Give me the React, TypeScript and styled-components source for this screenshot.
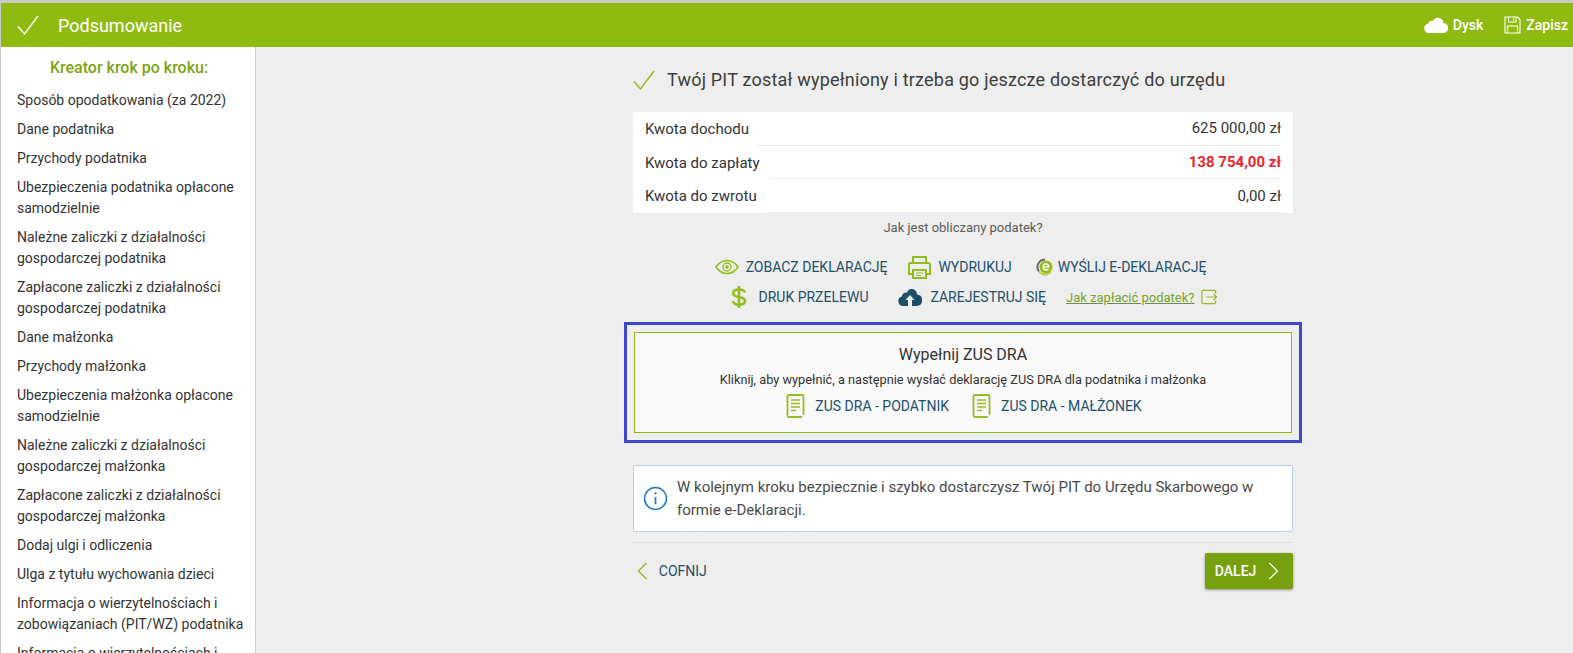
import React from 'react';
import styled, { createGlobalStyle } from 'styled-components';

const GlobalStyle = createGlobalStyle`
  html, body {
    margin: 0;
    padding: 0;
    height: 100%;
    overflow: hidden;
    background: #eeeeee;
    font-family: Roboto, "Liberation Sans", sans-serif;
  }
`;

const GREEN = '#8fbb11';

const Page = styled.div`
  width: 1573px;
  height: 653px;
  overflow: hidden;
  box-sizing: border-box;
  border-top: 3px solid #c8c8c8;
  border-left: 1px solid #c8c8c8;
  display: flex;
  flex-direction: column;
  background: #eeeeee;
`;

const TopBar = styled.header`
  flex: none;
  height: 44px;
  background: ${GREEN};
  display: flex;
  align-items: center;
  padding: 0 5px 0 16px;
  color: #fff;
`;

const TopTitle = styled.h1`
  margin: 0 0 0 19px;
  font-size: 18px;
  font-weight: 400;
  flex: 1;
`;

const TopLink = styled.a`
  display: flex;
  align-items: center;
  gap: 5px;
  font-size: 14px;
  font-weight: 500;
  margin-left: 21px;
  color: #fff;
`;

const Body = styled.div`
  flex: 1;
  min-height: 0;
  display: flex;
`;

const Sidebar = styled.nav`
  flex: none;
  width: 255px;
  box-sizing: border-box;
  background: #fff;
  border-right: 1px solid #d2d2d2;
  padding: 10px 8px 0 16px;
  overflow: hidden;
`;

const SidebarTitle = styled.div`
  color: #7ea313;
  font-size: 16px;
  font-weight: 500;
  text-align: center;
  line-height: 22px;
  margin: 0 6px 7px 0;
`;

const StepList = styled.ul`
  list-style: none;
  margin: 0;
  padding: 0;
`;

const Step = styled.li`
  font-size: 14px;
  line-height: 21px;
  color: #333333;
  padding: 4px 0;
`;

const Main = styled.main`
  flex: 1;
  min-width: 0;
  padding: 0 0 0 377px;
`;

const Column = styled.div`
  width: 660px;
`;

const Heading = styled.h2`
  display: flex;
  align-items: center;
  gap: 12px;
  margin: 19px 0 0;
  height: 27px;
  font-size: 18px;
  font-weight: 400;
  letter-spacing: 0.2px;
  color: #3d3d3d;
`;

const Summary = styled.div`
  margin-top: 19px;
  background: #fff;
  height: 101px;
  display: flex;
  flex-direction: column;
`;

const SummaryRow = styled.div`
  flex: 1;
  display: flex;
  align-items: stretch;
`;

const SummaryLabel = styled.div`
  display: flex;
  align-items: center;
  padding: 0 9px 0 12px;
  font-size: 15px;
  color: #333;
`;

const SummaryValue = styled.div<{ $due?: boolean }>`
  flex: 1;
  display: flex;
  align-items: center;
  justify-content: flex-end;
  margin-right: 12px;
  border-bottom: 1px solid #ececec;
  font-size: 15px;
  font-weight: ${p => (p.$due ? 700 : 400)};
  color: ${p => (p.$due ? '#e8262f' : '#333')};
`;

const HowLink = styled.div`
  margin-top: 7px;
  text-align: center;
  font-size: 13px;
  line-height: 16px;
  color: #5c5c5c;
`;

const Actions = styled.div<{ $first?: boolean; $indent?: number }>`
  display: flex;
  align-items: center;
  justify-content: center;
  height: 30px;
  padding-left: ${p => p.$indent ?? 0}px;
  padding-right: ${p => (p.$first ? '5px' : '0')};
  margin-top: ${p => (p.$first ? '16px' : '0')};
`;

const Action = styled.a<{ $gap?: number; $left?: number }>`
  display: flex;
  align-items: center;
  gap: ${p => p.$gap ?? 9}px;
  margin-left: ${p => p.$left ?? 0}px;
  font-size: 14px;
  color: #21506b;
`;

const PayLink = styled.a`
  display: flex;
  align-items: center;
  gap: 7px;
  margin-left: 20px;
  font-size: 13px;
  color: #76a32a;
  span {
    text-decoration: underline;
    text-decoration-color: #6f8a4d;
  }
`;

const ZusFrame = styled.div`
  margin: 10px -9px 0;
  border: 3px solid #3f48cc;
  padding: 7px;
`;

const ZusBox = styled.section`
  height: 101px;
  box-sizing: border-box;
  border: 1px solid ${GREEN};
  background: #f9f9f9;
  display: flex;
  flex-direction: column;
  align-items: center;
  padding-top: 12px;
`;

const ZusTitle = styled.div`
  font-size: 16px;
  line-height: 20px;
  color: #333;
`;

const ZusText = styled.div`
  margin-top: 7px;
  font-size: 12.75px;
  line-height: 16px;
  color: #333;
`;

const ZusLinks = styled.div`
  margin-top: 6px;
  margin-left: 2px;
  display: flex;
  gap: 23px;
`;

const Info = styled.div`
  margin-top: 22px;
  height: 67px;
  box-sizing: border-box;
  background: #fff;
  border: 1px solid #b9cfe8;
  border-radius: 2px;
  display: flex;
  align-items: center;
  gap: 9px;
  padding: 0 30px 0 9px;
  font-size: 15px;
  line-height: 23px;
  color: #4a4a4a;
`;

const Footer = styled.div`
  margin-top: 10px;
  border-top: 1px solid #dedede;
  padding-top: 10px;
  display: flex;
  align-items: center;
  justify-content: space-between;
`;

const BackLink = styled.a`
  display: flex;
  align-items: center;
  gap: 11px;
  margin-left: 4px;
  margin-top: -1px;
  font-size: 14px;
  color: #21506b;
`;

const NextButton = styled.button`
  width: 88px;
  height: 36px;
  border: 0;
  padding: 0 4px 0 0;
  border-radius: 2px;
  background: #76a00e;
  box-shadow: 0 1px 3px rgba(0, 0, 0, 0.4);
  color: #fff;
  font-family: inherit;
  font-size: 14px;
  font-weight: 500;
  display: flex;
  align-items: center;
  justify-content: center;
  gap: 12px;
`;

const Check = ({ size, color }: { size: number; color: string }) => (
  <svg width={size} height={size} viewBox="0 0 22 22" fill="none">
    <path d="M1 12.5 L7.5 20 L21 2" stroke={color} strokeWidth="1.4" />
  </svg>
);

const CloudIcon = () => (
  <svg width="24" height="16" viewBox="0 0 24 16">
    <path fill="#fff" d="M5 16a4.7 4.7 0 0 1-1-9.3A5.6 5.6 0 0 1 9 3.500a6 6 0 0 1 3.500-2.500c3.500-.8 6.500 1.500 7 5a4.800 4.800 0 0 1-.5 10z" />
  </svg>
);

const SaveIcon = () => (
  <svg width="17" height="18" viewBox="0 0 17 18" fill="none" stroke="#fff" strokeWidth="1.1">
    <path d="M1 1h12.500L16 3.500V17H1z" />
    <path d="M4.500 1v5h7.500V1M9.500 2.500v2M3.500 17v-7h10v7" />
  </svg>
);

const EyeIcon = () => (
  <svg width="24" height="16" viewBox="0 0 24 16" fill="none" stroke="#94bd1f">
    <path strokeWidth="1.600" d="M1 8c3-4.500 7-6.500 11-6.500S20 3.500 23 8c-3 4.500-7 6.500-11 6.500S4 12.500 1 8z" />
    <circle cx="12" cy="8" r="4" strokeWidth="1.400" />
    <circle cx="12" cy="8" r="1.800" fill="#94bd1f" stroke="none" />
  </svg>
);

const PrinterIcon = () => (
  <svg width="25" height="25" viewBox="0 0 25 25" fill="none" stroke="#94bd1f" strokeWidth="2">
    <path d="M6 8V2h13v6" />
    <path d="M6 19H2V9.500C2 8.500 2.500 8 3.500 8h18c1 0 1.500.5 1.500 1.500V19h-4" />
    <path d="M6 15h13v8H6z" />
    <path d="M9 18h7M9 20.500h5" strokeWidth="1.200" />
  </svg>
);

const EDeclarationIcon = () => (
  <svg width="18" height="18" viewBox="0 0 18 18" fill="none">
    <path d="M9 1.500a7.500 7.500 0 0 0-6 12" stroke="#666" strokeWidth="2" />
    <path d="M3 13.500a7.500 7.500 0 0 0 12 0" stroke="#b5d334" strokeWidth="2" />
    <circle cx="10" cy="9" r="6.500" fill="#94bd1f" />
    <path d="M7.300 9h5.400c0-2-1-3-2.700-3s-2.800 1.200-2.800 3 1.100 3 2.800 3c1 0 1.800-.3 2.400-1" stroke="#fff" strokeWidth="1.300" />
  </svg>
);

const DollarIcon = () => (
  <svg width="16" height="24" viewBox="0 0 16 24" fill="none" stroke="#94bd1f" strokeWidth="2.600">
    <path d="M14 7.500C13.500 5.500 11 4.500 8 4.500c-3.500 0-6 1.300-6 3.700C2 13.500 14 10.500 14 16c0 2.400-2.500 3.700-6 3.700-3.200 0-5.500-1.200-6-3.400" />
    <path d="M8 1v22" />
  </svg>
);

const CloudUploadIcon = () => (
  <svg width="24" height="18" viewBox="0 0 24 18">
    <path fill="#1c5068" d="M5 18a4.800 4.800 0 0 1-1.200-9.400A5 5 0 0 1 9 4.500 5.500 5.500 0 0 1 13.500 1c3 0 5.300 2.200 5.700 5.500A5.800 5.800 0 0 1 19 18z" />
    <path fill="#eeeeee" d="M12 7l4.500 5H14v6h-4v-6H7.500z" />
  </svg>
);

const ExitIcon = () => (
  <svg width="16" height="16" viewBox="0 0 18 18" fill="none" stroke="#94bd1f" strokeWidth="1.400">
    <path d="M16.500 5V3c0-1-.5-1.500-1.500-1.500H2.500C1.500 1.500 1 2 1 3v12c0 1 .5 1.500 1.500 1.500H15c1 0 1.500-.5 1.500-1.500v-2" />
    <path d="M6 9h11.500M14 5.500 17.500 9 14 12.500" />
  </svg>
);

const DocIcon = () => (
  <svg width="19" height="24" viewBox="0 0 19 24" fill="none" stroke="#94bd1f">
    <path strokeWidth="1.800" d="M17.500 21V2.500C17.500 1.500 17 1 16 1H3C2 1 1.500 1.500 1.500 2.500v19c0 .9.600 1.500 1.500 1.500h13" />
    <path strokeWidth="1.600" d="M5 6h9M5 9.500h9M5 13h9M5 16.500h5" />
  </svg>
);

const InfoGlyph = styled.svg`
  flex: none;
`;

const InfoIcon = () => (
  <InfoGlyph width="25" height="25" viewBox="0 0 24 24" fill="none" stroke="#1976d2">
    <circle cx="12" cy="12" r="10.500" strokeWidth="1.400" />
    <path d="M12 10.500v7" strokeWidth="1.600" />
    <circle cx="12" cy="7" r="1.100" fill="#1976d2" stroke="none" />
  </InfoGlyph>
);

const Chevron = ({ left, color, height }: { left?: boolean; color: string; height: number }) => (
  <svg width={height * 0.6} height={height} viewBox="0 0 10 18" fill="none" stroke={color} strokeWidth="1.200">
    <path d={left ? 'M9 1 1 9l8 8' : 'M1 1l8 8-8 8'} />
  </svg>
);

const steps = [
  'Sposób opodatkowania (za 2022)',
  'Dane podatnika',
  'Przychody podatnika',
  'Ubezpieczenia podatnika opłacone samodzielnie',
  'Należne zaliczki z działalności gospodarczej podatnika',
  'Zapłacone zaliczki z działalności gospodarczej podatnika',
  'Dane małżonka',
  'Przychody małżonka',
  'Ubezpieczenia małżonka opłacone samodzielnie',
  'Należne zaliczki z działalności gospodarczej małżonka',
  'Zapłacone zaliczki z działalności gospodarczej małżonka',
  'Dodaj ulgi i odliczenia',
  'Ulga z tytułu wychowania dzieci',
  'Informacja o wierzytelnościach i zobowiązaniach (PIT/WZ) podatnika',
  'Informacja o wierzytelnościach i zobowiązaniach (PIT/WZ) małżonka',
];

const App = () => (
  <Page>
    <GlobalStyle />
    <TopBar>
      <Check size={22} color="#fff" />
      <TopTitle>Podsumowanie</TopTitle>
      <TopLink><CloudIcon />Dysk</TopLink>
      <TopLink><SaveIcon />Zapisz</TopLink>
    </TopBar>
    <Body>
      <Sidebar>
        <SidebarTitle>Kreator krok po kroku:</SidebarTitle>
        <StepList>
          {steps.map(step => <Step key={step}>{step}</Step>)}
        </StepList>
      </Sidebar>
      <Main>
        <Column>
          <Heading>
            <Check size={22} color="#8fbb11" />
            Twój PIT został wypełniony i trzeba go jeszcze dostarczyć do urzędu
          </Heading>
          <Summary>
            <SummaryRow>
              <SummaryLabel>Kwota dochodu</SummaryLabel>
              <SummaryValue>625 000,00 zł</SummaryValue>
            </SummaryRow>
            <SummaryRow>
              <SummaryLabel>Kwota do zapłaty</SummaryLabel>
              <SummaryValue $due>138 754,00 zł</SummaryValue>
            </SummaryRow>
            <SummaryRow>
              <SummaryLabel>Kwota do zwrotu</SummaryLabel>
              <SummaryValue>0,00 zł</SummaryValue>
            </SummaryRow>
          </Summary>
          <HowLink>Jak jest obliczany podatek?</HowLink>
          <Actions $first>
            <Action $gap={7}><EyeIcon />ZOBACZ DEKLARACJĘ</Action>
            <Action $left={20} $gap={6}><PrinterIcon />WYDRUKUJ</Action>
            <Action $left={24} $gap={4}><EDeclarationIcon />WYŚLIJ E-DEKLARACJĘ</Action>
          </Actions>
          <Actions $indent={22}>
            <Action $gap={12}><DollarIcon />DRUK PRZELEWU</Action>
            <Action $left={30} $gap={8}><CloudUploadIcon />ZAREJESTRUJ SIĘ</Action>
            <PayLink><span>Jak zapłacić podatek?</span><ExitIcon /></PayLink>
          </Actions>
          <ZusFrame>
            <ZusBox>
              <ZusTitle>Wypełnij ZUS DRA</ZusTitle>
              <ZusText>Kliknij, aby wypełnić, a następnie wysłać deklarację ZUS DRA dla podatnika i małżonka</ZusText>
              <ZusLinks>
                <Action $gap={10}><DocIcon />ZUS DRA - PODATNIK</Action>
                <Action $gap={10}><DocIcon />ZUS DRA - MAŁŻONEK</Action>
              </ZusLinks>
            </ZusBox>
          </ZusFrame>
          <Info>
            <InfoIcon />
            <div>W kolejnym kroku bezpiecznie i szybko dostarczysz Twój PIT do Urzędu Skarbowego w formie e-Deklaracji.</div>
          </Info>
          <Footer>
            <BackLink><Chevron left color="#8fbb11" height={18} />COFNIJ</BackLink>
            <NextButton>DALEJ<Chevron color="#fff" height={18} /></NextButton>
          </Footer>
        </Column>
      </Main>
    </Body>
  </Page>
);

export default App;
